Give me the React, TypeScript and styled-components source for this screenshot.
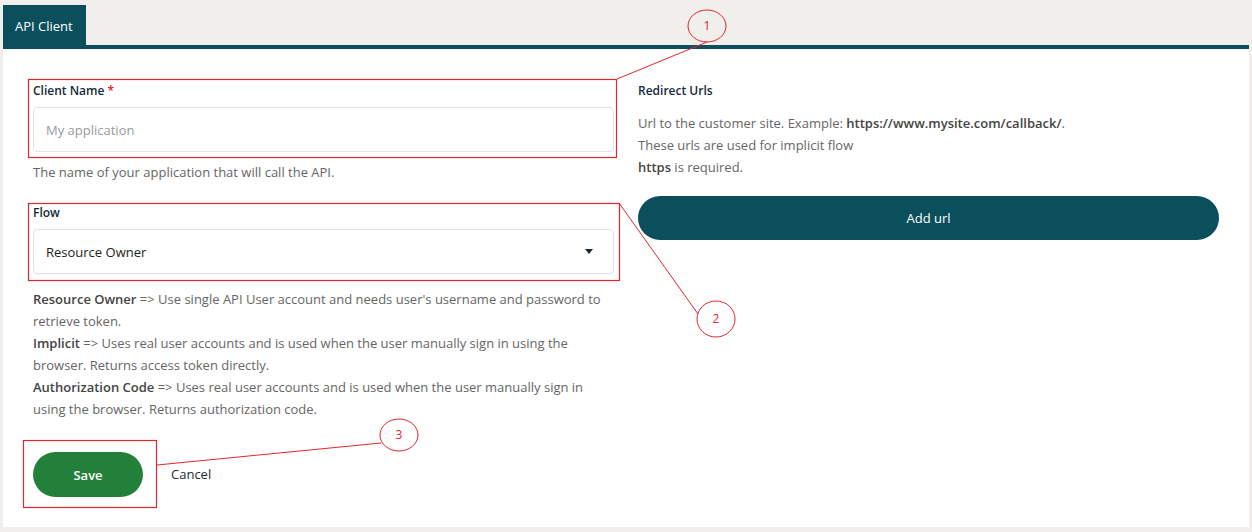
import React from 'react';
import styled, { createGlobalStyle } from 'styled-components';

const GlobalStyle = createGlobalStyle`
  html, body {
    margin: 0;
    padding: 0;
    background: #f1efec;
    font-family: 'Open Sans', 'Liberation Sans', sans-serif;
  }
  * {
    box-sizing: border-box;
  }
`;

const Page = styled.div`
  position: relative;
  width: 1252px;
  height: 532px;
  padding: 5px 3px 0 3px;
`;

const TabBar = styled.div`
  display: flex;
  border-bottom: 4px solid #0b4f5c;
`;

const Tab = styled.div`
  width: 83px;
  height: 40px;
  background: #0b4f5c;
  color: #ffffff;
  font-size: 13px;
  display: flex;
  align-items: center;
  padding: 2px 0 0 12px;
`;

const Panel = styled.div`
  background: #ffffff;
  height: 478px;
  padding: 33px 30px 0 30px;
  display: grid;
  grid-template-columns: 1fr 1fr;
  column-gap: 24px;
  align-items: start;
`;

const Column = styled.div`
  display: flex;
  flex-direction: column;
`;

const Label = styled.div<{ $top?: number }>`
  font-size: 12px;
  font-weight: 600;
  line-height: 18px;
  color: #14293a;
  margin-top: ${(p) => p.$top ?? 0}px;
  margin-bottom: 7px;
`;

const Required = styled.span`
  color: #e0121a;
`;

const Field = styled.div`
  height: 45px;
  border: 1px solid #dde4e8;
  border-radius: 4px;
  display: flex;
  align-items: center;
  justify-content: space-between;
  padding: 0 20px 0 12px;
  font-size: 13px;
  color: #222;
`;

const Placeholder = styled.span`
  color: #9a9a9a;
`;

const Caret = styled.span`
  width: 0;
  height: 0;
  border-left: 4px solid transparent;
  border-right: 4px solid transparent;
  border-top: 5px solid #14293a;
`;

const Help = styled.div<{ $top?: number }>`
  font-size: 13px;
  line-height: 22px;
  color: #666666;
  margin-top: ${(p) => p.$top ?? 0}px;
`;

const Strong = styled.b`
  font-weight: 600;
  color: #444444;
`;

const Actions = styled.div`
  display: flex;
  align-items: center;
  gap: 28px;
  margin-top: 32px;
`;

const PillButton = styled.button<{ $bg: string; $width?: string }>`
  height: 45px;
  width: ${(p) => p.$width ?? '100%'};
  border: none;
  border-radius: 23px;
  background: ${(p) => p.$bg};
  color: #ffffff;
  font-family: inherit;
  font-size: 13px;
  font-weight: 600;
  cursor: pointer;
`;

const LinkButton = styled.span`
  font-size: 13px;
  color: #1d2a36;
  margin-bottom: 2px;
`;

const Overlay = styled.svg`
  position: absolute;
  top: 0;
  left: 0;
  pointer-events: none;
`;

const RED = '#e3262c';

const marks = [
  { rect: [28.5, 79.5, 588, 78], line: [617, 79, 707, 42], c: [707, 26, 19, 16], n: '1' },
  { rect: [28.5, 203.5, 591, 77], line: [619, 203, 698, 314], c: [716, 319, 19, 18], n: '2' },
  { rect: [23.5, 440.5, 133, 67], line: [157, 465, 381, 443], c: [399, 435, 19, 16], n: '3' },
];

export default function App() {
  return (
    <>
      <GlobalStyle />
      <Page>
        <TabBar>
          <Tab>API Client</Tab>
        </TabBar>
        <Panel>
          <Column>
            <Label>
              Client Name <Required>*</Required>
            </Label>
            <Field>
              <Placeholder>My application</Placeholder>
            </Field>
            <Help $top={9}>The name of your application that will call the API.</Help>
            <Label $top={21}>Flow</Label>
            <Field>
              <span>Resource Owner</span>
              <Caret />
            </Field>
            <Help $top={14}>
              <Strong>Resource Owner</Strong> =&gt; Use single API User account and needs user's username and password to
              retrieve token.
              <br />
              <Strong>Implicit</Strong> =&gt; Uses real user accounts and is used when the user manually sign in using the
              browser. Returns access token directly.
              <br />
              <Strong>Authorization Code</Strong> =&gt; Uses real user accounts and is used when the user manually sign in
              using the browser. Returns authorization code.
            </Help>
            <Actions>
              <PillButton $bg="#23803a" $width="110px">Save</PillButton>
              <LinkButton>Cancel</LinkButton>
            </Actions>
          </Column>
          <Column>
            <Label>Redirect Urls</Label>
            <Help $top={5}>
              Url to the customer site. Example: <Strong>https://www.mysite.com/callback/</Strong>.
              <br />
              These urls are used for implicit flow
              <br />
              <Strong>https</Strong> is required.
            </Help>
            <PillButton $bg="#0b4f5c" style={{ marginTop: 18, height: 44, fontWeight: 400 }}>
              Add url
            </PillButton>
          </Column>
        </Panel>
        <Overlay width={1252} height={532} viewBox="0 0 1252 532">
          {marks.map((m) => (
            <g key={m.n} fill="none" stroke={RED}>
              <rect x={m.rect[0]} y={m.rect[1]} width={m.rect[2]} height={m.rect[3]} strokeWidth={1.2} />
              <line x1={m.line[0]} y1={m.line[1]} x2={m.line[2]} y2={m.line[3]} strokeWidth={1} />
              <ellipse cx={m.c[0]} cy={m.c[1]} rx={m.c[2]} ry={m.c[3]} strokeWidth={1} />
              <text
                x={m.c[0]}
                y={m.c[1] + 4}
                fill={RED}
                stroke="none"
                fontSize={12}
                textAnchor="middle"
                fontFamily="'Open Sans', sans-serif"
              >
                {m.n}
              </text>
            </g>
          ))}
        </Overlay>
      </Page>
    </>
  );
}
